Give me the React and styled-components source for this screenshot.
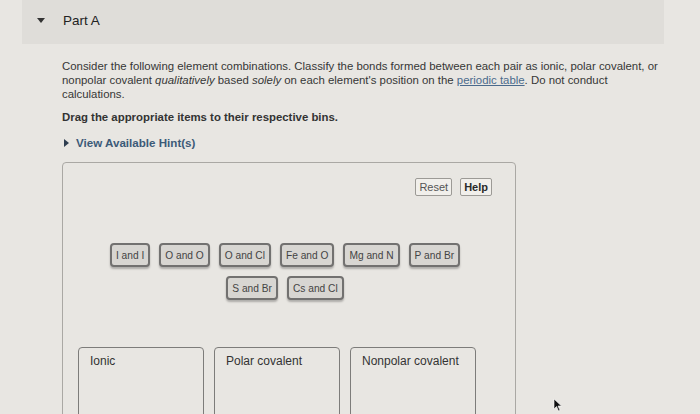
import styled, { createGlobalStyle } from 'styled-components';

const Global = createGlobalStyle`
 body {
  margin: 0;
  background: #e8e6e2;
  font-family: 'Liberation Sans', Arial, sans-serif;
 }
`;

const Page = styled.div`
 position: relative;
 width: 700px;
 height: 414px;
 overflow: hidden;
 background: #e8e6e2;
`;

const Header = styled.div`
 margin-left: 22px;
 width: 642px;
 height: 44px;
 background: #dfddd9;
 display: flex;
 align-items: center;
 gap: 18px;
 padding: 0 0 4px 15px;
 box-sizing: border-box;
`;

const Caret = styled.span`
 width: 0;
 height: 0;
 border-left: 4px solid transparent;
 border-right: 4px solid transparent;
 border-top: 5px solid #333;
`;

const PartTitle = styled.h2`
 margin: 0;
 font-size: 13.5px;
 font-weight: 400;
 color: #222;
`;

const Content = styled.div`
 padding: 15px 0 0 62px;
`;

const Text = styled.p`
 margin: 0;
 width: 605px;
 font-size: 11.4px;
 line-height: 14px;
 color: #363636;
`;

const Link = styled.a`
 color: #4a6a8c;
 text-decoration: underline;
`;

const Instruction = styled.p`
 margin: 9px 0 0;
 font-size: 11.4px;
 line-height: 14px;
 font-weight: 700;
 color: #333;
`;

const Hint = styled.div`
 margin-top: 12px;
 display: flex;
 align-items: center;
 gap: 7px;
 font-size: 11.6px;
 font-weight: 700;
 color: #3c5a78;
 line-height: 14px;
`;

const HintCaret = styled.span`
 width: 0;
 height: 0;
 border-top: 4px solid transparent;
 border-bottom: 4px solid transparent;
 border-left: 5px solid #2f3e50;
 margin-left: 2px;
`;

const Board = styled.div`
 margin-top: 12px;
 width: 454px;
 height: 300px;
 border: 1px solid #aaa8a4;
 border-radius: 4px;
 box-sizing: border-box;
 padding: 15px 23px 0 15px;
`;

const Toolbar = styled.div`
 display: flex;
 justify-content: flex-end;
 gap: 8px;
`;

const ToolButton = styled.button`
 height: 18px;
 padding: 0 3px;
 font-family: inherit;
 font-size: 11px;
 font-weight: ${p => (p.$bold ? 700 : 400)};
 color: ${p => (p.$bold ? '#2a2a2a' : '#555')};
 background: #f1efeb;
 border: 1px solid #9c9a96;
 border-radius: 2px;
`;

const Items = styled.div`
 margin: 47px auto 0;
 width: 370px;
 display: flex;
 flex-wrap: wrap;
 justify-content: center;
 gap: 9px 9px;
`;

const Item = styled.div`
 height: 24px;
 padding: 0 4px;
 box-sizing: border-box;
 display: flex;
 align-items: center;
 font-size: 10.2px;
 color: #444;
 background: #d8d6d2;
 border: 2px solid #727170;
 border-radius: 4px;
 box-shadow: 0 2px 2px rgba(0, 0, 0, 0.25);
`;

const Bins = styled.div`
 margin-top: 47px;
 display: flex;
 gap: 10px;
`;

const Bin = styled.div`
 width: 126px;
 height: 120px;
 box-sizing: border-box;
 border: 1.5px solid #7d7c7a;
 border-radius: 4px;
 padding: 6px 11px;
 font-size: 12px;
 color: #333;
`;

const Cursor = styled.svg`
 position: absolute;
 left: 553px;
 top: 398px;
`;

const items = ['I and I', 'O and O', 'O and Cl', 'Fe and O', 'Mg and N', 'P and Br', 'S and Br', 'Cs and Cl'];
const bins = ['Ionic', 'Polar covalent', 'Nonpolar covalent'];

const App = () => {
 return (
  <Page>
   <Global />
   <Header>
    <Caret />
    <PartTitle>Part A</PartTitle>
   </Header>
   <Content>
    <Text>
     Consider the following element combinations. Classify the bonds formed between each pair as ionic, polar covalent, or
     nonpolar covalent <i>qualitatively</i> based <i>solely</i> on each element's position on the{' '}
     <Link>periodic table</Link>. Do not conduct calculations.
    </Text>
    <Instruction>Drag the appropriate items to their respective bins.</Instruction>
    <Hint>
     <HintCaret />
     View Available Hint(s)
    </Hint>
    <Board>
     <Toolbar>
      <ToolButton>Reset</ToolButton>
      <ToolButton $bold>Help</ToolButton>
     </Toolbar>
     <Items>
      {items.map(i => (
       <Item key={i}>{i}</Item>
      ))}
     </Items>
     <Bins>
      {bins.map(b => (
       <Bin key={b}>{b}</Bin>
      ))}
     </Bins>
    </Board>
   </Content>
   <Cursor width='10' height='14' viewBox='0 0 10 14'>
    <path d='M1 1 L1 11 L3.5 8.5 L5.5 13 L7 12.3 L5 8 L8.5 8 Z' fill='#111' stroke='#fff' strokeWidth='0.6' />
   </Cursor>
  </Page>
 );
};

export default App;
